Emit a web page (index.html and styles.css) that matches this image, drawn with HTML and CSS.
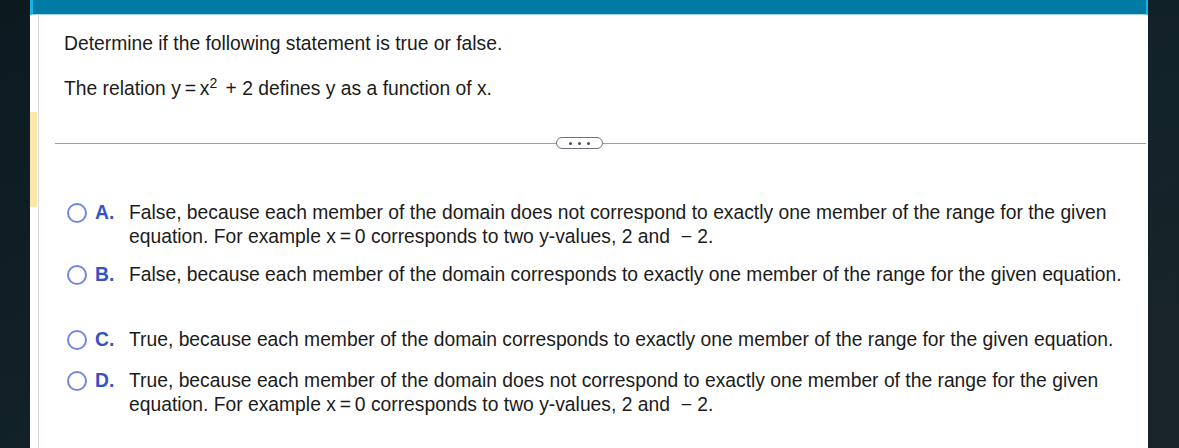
FILE: index.html
```html
<!DOCTYPE html>
<html>
<head>
<meta charset="utf-8">
<link rel="stylesheet" href="styles.css">
</head>
<body>
<div class="frame">
  <div class="topbar"></div>
  <div class="main">
    <div class="gutter"><div class="mark"></div></div>
    <div class="content">
      <p class="q q1">Determine if the following statement is true or false.</p>
      <p class="q q2">The relation y&#8201;=&#8201;x<sup>2</sup> + 2 defines y as a function of x.</p>
      <div class="divider">
        <div class="rule rule-left"></div>
        <div class="more"><span></span><span></span><span></span></div>
        <div class="rule"></div>
      </div>
      <div class="options">
        <div class="opt opt-a">
          <span class="radio"></span><span class="letter">A.</span>
          <span class="txt">False, because each member of the domain does not correspond to exactly one member of the range for the given equation. For example x&#8201;=&#8201;0 corresponds to two y-values, 2 and &nbsp;− 2.</span>
        </div>
        <div class="opt opt-b">
          <span class="radio"></span><span class="letter">B.</span>
          <span class="txt">False, because each member of the domain corresponds to exactly one member of the range for the given equation.</span>
        </div>
        <div class="opt opt-c">
          <span class="radio"></span><span class="letter">C.</span>
          <span class="txt">True, because each member of the domain corresponds to exactly one member of the range for the given equation.</span>
        </div>
        <div class="opt opt-d">
          <span class="radio"></span><span class="letter">D.</span>
          <span class="txt">True, because each member of the domain does not correspond to exactly one member of the range for the given equation. For example x&#8201;=&#8201;0 corresponds to two y-values, 2 and &nbsp;− 2.</span>
        </div>
      </div>
    </div>
  </div>
</div>
</body>
</html>
```
FILE: styles.css
```css
html, body {
  margin: 0;
  padding: 0;
}
body {
  width: 1179px;
  height: 448px;
  overflow: hidden;
  background: linear-gradient(160deg, #0c1a20 0%, #13232a 60%, #1a2428 100%);
  font-family: "Liberation Sans", Arial, sans-serif;
  color: #1b1b1b;
}
.frame {
  margin-left: 30px;
  width: 1118px;
  height: 448px;
  background: #ffffff;
  display: flex;
  flex-direction: column;
}
.topbar {
  height: 14px;
  background: #007ba3;
  border-left: 3px solid #19b3e6;
  border-right: 2px solid #19b3e6;
  border-bottom: 1px solid #a3d2e2;
}
.main {
  flex: 1;
  display: flex;
}
.gutter {
  width: 8px;
}
.mark {
  margin-top: 97px;
  height: 95px;
  width: 7px;
  background: #fbe7a6;
}
.content {
  flex: 1;
  border-left: 1px solid #d7dae2;
  padding: 17px 2px 0 25px;
}
.q {
  margin: 0;
  font-size: 19.3px;
  line-height: 24px;
}
.q2 {
  margin-top: 21px;
}
sup {
  font-size: 14px;
  line-height: 0;
  vertical-align: 7px;
  margin-right: 3px;
}
.divider {
  margin: 30px 0 0 -9px;
  display: flex;
  align-items: center;
  height: 24px;
}
.rule {
  flex: 1;
  height: 1px;
  background: #9ba0ab;
}
.rule-left {
  flex: none;
  width: 501px;
}
.more {
  width: 45px;
  height: 10px;
  border: 1.5px solid #6c717c;
  border-radius: 7px;
  display: flex;
  justify-content: center;
  align-items: center;
  gap: 6px;
  background: #fff;
}
.more span {
  width: 3px;
  height: 3px;
  border-radius: 50%;
  background: #4a4f58;
}
.options {
  margin-top: 46px;
  display: flex;
  flex-direction: column;
}
.opt {
  display: flex;
  align-items: flex-start;
  font-size: 19.3px;
  line-height: 24px;
}
.radio {
  flex: none;
  width: 16px;
  height: 16px;
  border: 2px solid #7487e0;
  border-radius: 50%;
  margin: 2px 0 0 3px;
}
.letter {
  flex: none;
  width: 34px;
  margin-left: 8px;
  font-weight: bold;
  color: #3552c6;
}
.txt {
  flex: 1;
  padding-right: 20px;
}
.opt-b { margin-top: 14px; }
.opt-c { margin-top: 41px; }
.opt-d { margin-top: 17px; }
```
